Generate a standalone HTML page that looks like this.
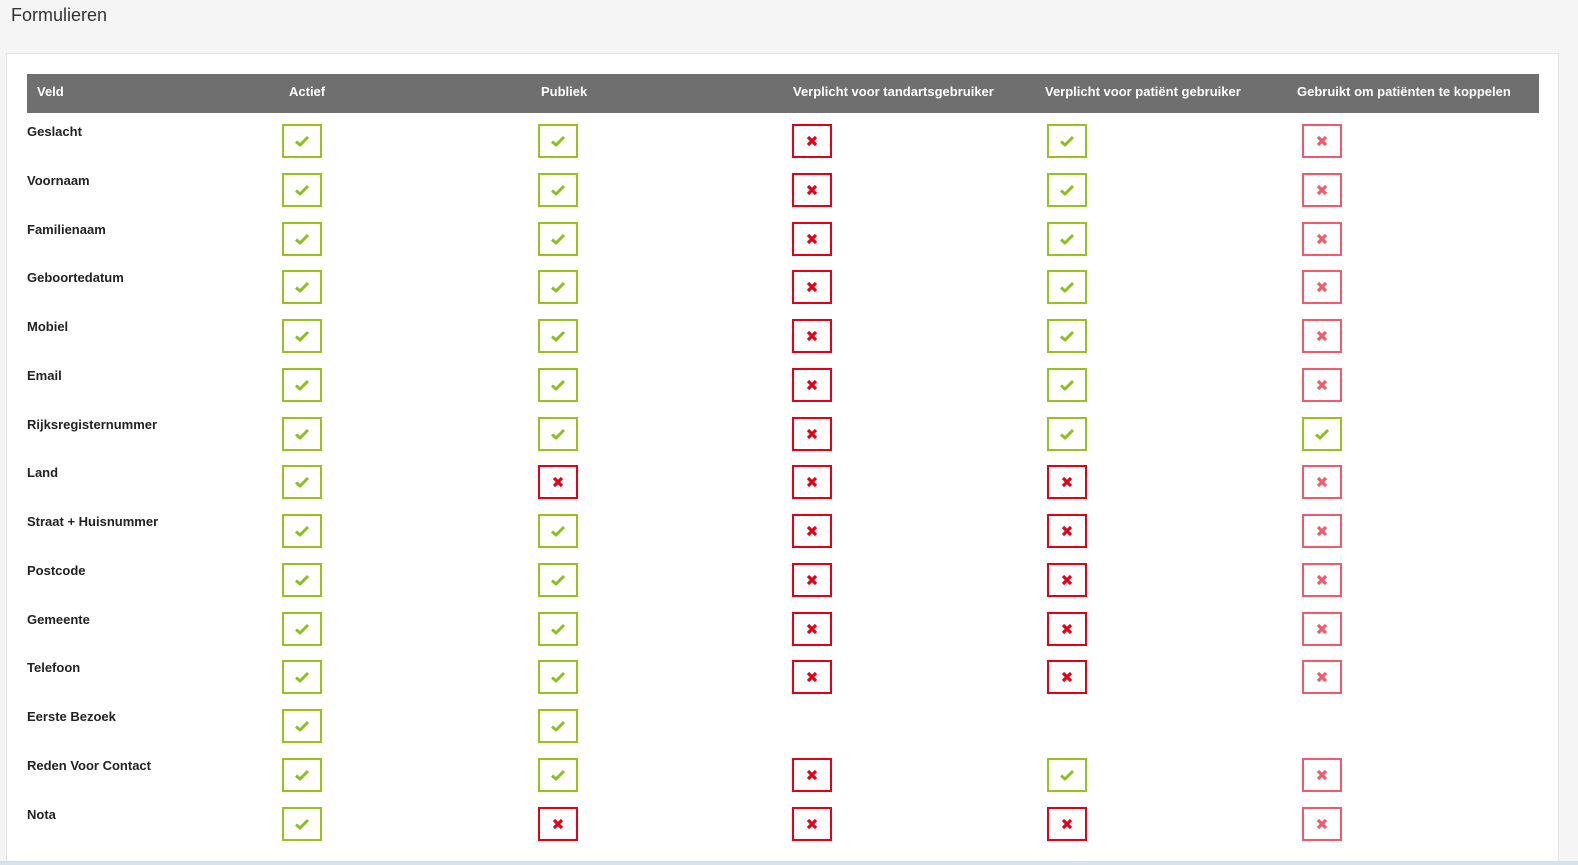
<!DOCTYPE html>
<html><head><meta charset="utf-8"><style>
*{margin:0;padding:0;box-sizing:border-box}
body{width:1578px;height:865px;background:#f5f5f5;font-family:"Liberation Sans",Arial,sans-serif;position:relative;overflow:hidden}
h1{position:absolute;left:11px;top:5px;font-size:18px;font-weight:normal;color:#333}
.panel{position:absolute;left:6px;top:53px;width:1553px;height:812px;background:#fff;border:1px solid #e3e3e3}
.bottom{position:absolute;left:0;top:861px;width:1578px;height:4px;background:#d6e2ec}
table{position:absolute;left:27px;top:74px;width:1511px;border-collapse:collapse;table-layout:fixed}
th{background:#6f6f6f;color:#fff;font-size:13px;font-weight:bold;text-align:left;height:39px;padding-left:10px;padding-bottom:4px;vertical-align:middle;width:252px}
td{height:48.75px;vertical-align:top;padding:0;font-size:13px;font-weight:bold;color:#222}
td.l{padding-top:11px;line-height:15px}
.b{display:block;margin:11px 0 0 3px;width:40px;height:34px;border:2px solid;position:relative}
td:nth-child(3) .b{margin-left:7px}
td:nth-child(4) .b{margin-left:9px}
td:nth-child(5) .b{margin-left:12px}
td:nth-child(6) .b{margin-left:15px}
.c{border-color:#97c11f}.x{border-color:#e2001a}.y{border-color:#ef5b6a}
.b svg{position:absolute;left:50%;top:50%;transform:translate(-50%,-50%)}
</style></head><body>
<h1>Formulieren</h1>
<div class="panel"></div>
<div class="bottom"></div>
<svg width="0" height="0" style="position:absolute"><defs>
<symbol id="ck" viewBox="0 0 14 11"><path d="M1 6 L5 9.5 L13 1.5" fill="none" stroke="#8fbf1f" stroke-width="3"/></symbol>
<symbol id="cr" viewBox="0 0 12 12"><path d="M2 2 L10 10 M10 2 L2 10" fill="none" stroke="#e2001a" stroke-width="3.2"/></symbol>
<symbol id="cl" viewBox="0 0 12 12"><path d="M2 2 L10 10 M10 2 L2 10" fill="none" stroke="#ef5b6a" stroke-width="3.2"/></symbol>
</defs></svg>
<table>
<tr><th>Veld</th><th>Actief</th><th>Publiek</th><th>Verplicht voor tandartsgebruiker</th><th>Verplicht voor patiënt gebruiker</th><th>Gebruikt om patiënten te koppelen</th></tr>
<tbody id="tb">
<tr><td class="l">Geslacht</td><td><i class="b c"><svg width="14" height="11"><use href="#ck"/></svg></i></td><td><i class="b c"><svg width="14" height="11"><use href="#ck"/></svg></i></td><td><i class="b x"><svg width="12" height="12"><use href="#cr"/></svg></i></td><td><i class="b c"><svg width="14" height="11"><use href="#ck"/></svg></i></td><td><i class="b y"><svg width="12" height="12"><use href="#cl"/></svg></i></td></tr>
<tr><td class="l">Voornaam</td><td><i class="b c"><svg width="14" height="11"><use href="#ck"/></svg></i></td><td><i class="b c"><svg width="14" height="11"><use href="#ck"/></svg></i></td><td><i class="b x"><svg width="12" height="12"><use href="#cr"/></svg></i></td><td><i class="b c"><svg width="14" height="11"><use href="#ck"/></svg></i></td><td><i class="b y"><svg width="12" height="12"><use href="#cl"/></svg></i></td></tr>
<tr><td class="l">Familienaam</td><td><i class="b c"><svg width="14" height="11"><use href="#ck"/></svg></i></td><td><i class="b c"><svg width="14" height="11"><use href="#ck"/></svg></i></td><td><i class="b x"><svg width="12" height="12"><use href="#cr"/></svg></i></td><td><i class="b c"><svg width="14" height="11"><use href="#ck"/></svg></i></td><td><i class="b y"><svg width="12" height="12"><use href="#cl"/></svg></i></td></tr>
<tr><td class="l">Geboortedatum</td><td><i class="b c"><svg width="14" height="11"><use href="#ck"/></svg></i></td><td><i class="b c"><svg width="14" height="11"><use href="#ck"/></svg></i></td><td><i class="b x"><svg width="12" height="12"><use href="#cr"/></svg></i></td><td><i class="b c"><svg width="14" height="11"><use href="#ck"/></svg></i></td><td><i class="b y"><svg width="12" height="12"><use href="#cl"/></svg></i></td></tr>
<tr><td class="l">Mobiel</td><td><i class="b c"><svg width="14" height="11"><use href="#ck"/></svg></i></td><td><i class="b c"><svg width="14" height="11"><use href="#ck"/></svg></i></td><td><i class="b x"><svg width="12" height="12"><use href="#cr"/></svg></i></td><td><i class="b c"><svg width="14" height="11"><use href="#ck"/></svg></i></td><td><i class="b y"><svg width="12" height="12"><use href="#cl"/></svg></i></td></tr>
<tr><td class="l">Email</td><td><i class="b c"><svg width="14" height="11"><use href="#ck"/></svg></i></td><td><i class="b c"><svg width="14" height="11"><use href="#ck"/></svg></i></td><td><i class="b x"><svg width="12" height="12"><use href="#cr"/></svg></i></td><td><i class="b c"><svg width="14" height="11"><use href="#ck"/></svg></i></td><td><i class="b y"><svg width="12" height="12"><use href="#cl"/></svg></i></td></tr>
<tr><td class="l">Rijksregisternummer</td><td><i class="b c"><svg width="14" height="11"><use href="#ck"/></svg></i></td><td><i class="b c"><svg width="14" height="11"><use href="#ck"/></svg></i></td><td><i class="b x"><svg width="12" height="12"><use href="#cr"/></svg></i></td><td><i class="b c"><svg width="14" height="11"><use href="#ck"/></svg></i></td><td><i class="b c"><svg width="14" height="11"><use href="#ck"/></svg></i></td></tr>
<tr><td class="l">Land</td><td><i class="b c"><svg width="14" height="11"><use href="#ck"/></svg></i></td><td><i class="b x"><svg width="12" height="12"><use href="#cr"/></svg></i></td><td><i class="b x"><svg width="12" height="12"><use href="#cr"/></svg></i></td><td><i class="b x"><svg width="12" height="12"><use href="#cr"/></svg></i></td><td><i class="b y"><svg width="12" height="12"><use href="#cl"/></svg></i></td></tr>
<tr><td class="l">Straat + Huisnummer</td><td><i class="b c"><svg width="14" height="11"><use href="#ck"/></svg></i></td><td><i class="b c"><svg width="14" height="11"><use href="#ck"/></svg></i></td><td><i class="b x"><svg width="12" height="12"><use href="#cr"/></svg></i></td><td><i class="b x"><svg width="12" height="12"><use href="#cr"/></svg></i></td><td><i class="b y"><svg width="12" height="12"><use href="#cl"/></svg></i></td></tr>
<tr><td class="l">Postcode</td><td><i class="b c"><svg width="14" height="11"><use href="#ck"/></svg></i></td><td><i class="b c"><svg width="14" height="11"><use href="#ck"/></svg></i></td><td><i class="b x"><svg width="12" height="12"><use href="#cr"/></svg></i></td><td><i class="b x"><svg width="12" height="12"><use href="#cr"/></svg></i></td><td><i class="b y"><svg width="12" height="12"><use href="#cl"/></svg></i></td></tr>
<tr><td class="l">Gemeente</td><td><i class="b c"><svg width="14" height="11"><use href="#ck"/></svg></i></td><td><i class="b c"><svg width="14" height="11"><use href="#ck"/></svg></i></td><td><i class="b x"><svg width="12" height="12"><use href="#cr"/></svg></i></td><td><i class="b x"><svg width="12" height="12"><use href="#cr"/></svg></i></td><td><i class="b y"><svg width="12" height="12"><use href="#cl"/></svg></i></td></tr>
<tr><td class="l">Telefoon</td><td><i class="b c"><svg width="14" height="11"><use href="#ck"/></svg></i></td><td><i class="b c"><svg width="14" height="11"><use href="#ck"/></svg></i></td><td><i class="b x"><svg width="12" height="12"><use href="#cr"/></svg></i></td><td><i class="b x"><svg width="12" height="12"><use href="#cr"/></svg></i></td><td><i class="b y"><svg width="12" height="12"><use href="#cl"/></svg></i></td></tr>
<tr><td class="l">Eerste Bezoek</td><td><i class="b c"><svg width="14" height="11"><use href="#ck"/></svg></i></td><td><i class="b c"><svg width="14" height="11"><use href="#ck"/></svg></i></td><td></td><td></td><td></td></tr>
<tr><td class="l">Reden Voor Contact</td><td><i class="b c"><svg width="14" height="11"><use href="#ck"/></svg></i></td><td><i class="b c"><svg width="14" height="11"><use href="#ck"/></svg></i></td><td><i class="b x"><svg width="12" height="12"><use href="#cr"/></svg></i></td><td><i class="b c"><svg width="14" height="11"><use href="#ck"/></svg></i></td><td><i class="b y"><svg width="12" height="12"><use href="#cl"/></svg></i></td></tr>
<tr><td class="l">Nota</td><td><i class="b c"><svg width="14" height="11"><use href="#ck"/></svg></i></td><td><i class="b x"><svg width="12" height="12"><use href="#cr"/></svg></i></td><td><i class="b x"><svg width="12" height="12"><use href="#cr"/></svg></i></td><td><i class="b x"><svg width="12" height="12"><use href="#cr"/></svg></i></td><td><i class="b y"><svg width="12" height="12"><use href="#cl"/></svg></i></td></tr>
</tbody>
</table>
</body></html>
